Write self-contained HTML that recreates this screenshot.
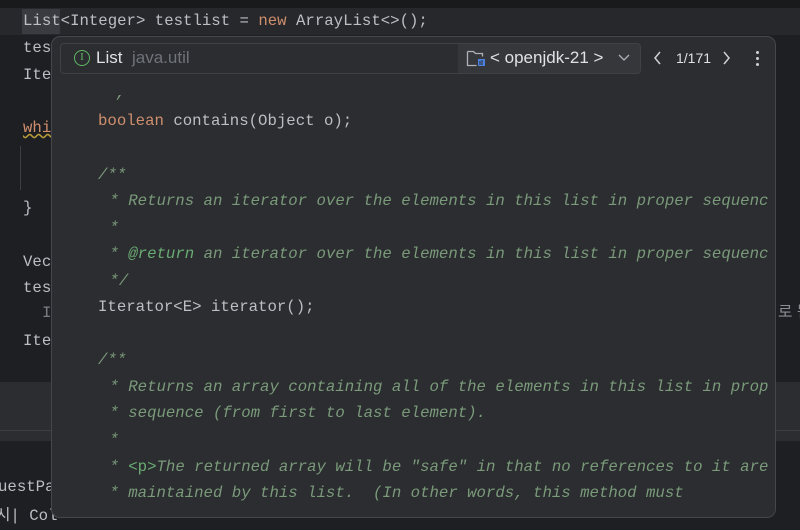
<!DOCTYPE html>
<html><head><meta charset="utf-8"><style>
*{margin:0;padding:0;box-sizing:border-box}
body{width:800px;height:530px;overflow:hidden;background:#1e1f22;position:relative;font-family:"Liberation Mono",monospace;font-size:15.7px;color:#bcbec4}
.t{position:absolute;white-space:pre;line-height:20px}
.k{color:#cf8e6d}.c{color:#7a9a7a;font-style:italic}.tg{color:#6aab73}
#pop{position:absolute;left:51px;top:36px;width:725px;height:482px;background:#2b2d30;border:1px solid #45474c;border-radius:9px;overflow:hidden}
.s{font-family:"Liberation Sans",sans-serif}
</style></head><body>
<div style="position:absolute;left:0;top:0;width:800px;height:8px;background:#191a1c"></div>
<div style="position:absolute;left:0;top:8px;width:800px;height:27px;background:#26282b"></div>
<div style="position:absolute;left:22px;top:9px;width:38px;height:25px;background:#393b40"></div>
<div class="t" style="left:23px;top:11px">List&lt;Integer&gt; testlist = <span class="k">new</span> ArrayList&lt;&gt;();</div>
<div class="t" style="left:23px;top:38px">tes</div>
<div class="t" style="left:23px;top:65px">Ite</div>
<div class="t" style="left:23px;top:118px;color:#cf8e6d;text-decoration:underline wavy #b89b3a">whi</div>
<div style="position:absolute;left:20px;top:146px;width:1px;height:44px;background:#3c3e42"></div>
<div class="t" style="left:23px;top:198px">}</div>
<div class="t" style="left:23px;top:252px">Vec</div>
<div class="t" style="left:23px;top:278px">tes</div>
<div class="t" style="left:42px;top:303px;color:#7a7e85">I</div>
<div class="t" style="left:23px;top:331px">Ite</div>
<div class="t" style="left:778px;top:303px;color:#8a8d93;font-family:'Liberation Sans','Noto Sans CJK KR',sans-serif">로 됨</div>
<div style="position:absolute;left:0;top:382px;width:800px;height:48px;background:#2b2d30"></div>
<div style="position:absolute;left:0;top:430px;width:800px;height:1px;background:#3c3e42"></div>
<div style="position:absolute;left:0;top:431px;width:800px;height:10px;background:#2b2d30"></div>
<div class="t" style="left:-2px;top:477px">uestPa</div>
<div class="t" style="left:-4px;top:506px;font-family:'Liberation Mono','Noto Sans CJK KR',monospace">시| Col</div>
<div id="pop">
 <div style="position:absolute;left:8px;top:6px;width:581px;height:31px;border:1px solid #3f4146;border-radius:4px;background:#35373b"></div>
 <div style="position:absolute;left:9px;top:7px;width:397px;height:29px;background:#2b2d30;border-radius:3px 0 0 3px"></div>
 <div style="position:absolute;left:22px;top:13px;width:16px;height:16px;border:1.5px solid #5fb865;border-radius:50%;color:#5fb865;font:11px 'Liberation Serif',serif;text-align:center;line-height:13px">I</div>
 <div class="t s" style="left:44px;top:11px;font-size:17px;color:#dfe1e5">List</div>
 <div class="t s" style="left:80px;top:11px;font-size:17px;color:#6f737a">java.util</div>
 <svg style="position:absolute;left:414px;top:12px" width="22" height="20" viewBox="0 0 22 20"><path d="M1.5 2.5h6l2 2h7v3M1.5 2.5v14h9" fill="none" stroke="#aeb1b7" stroke-width="1.3"/><rect x="12" y="10" width="7" height="7" fill="#4b7fe0"/><path d="M14 12v4M16 11v5" stroke="#2b2d30"/></svg>
 <div class="t s" style="left:438px;top:11px;font-size:17px;color:#dfe1e5">&lt; openjdk-21 &gt;</div>
 <svg style="position:absolute;left:566px;top:17px" width="12" height="8"><path d="M1 1l5 5 5-5" fill="none" stroke="#aeb1b7" stroke-width="1.3"/></svg>
 <svg style="position:absolute;left:601px;top:14px" width="10" height="14"><path d="M7 1L2 7l5 6" fill="none" stroke="#ced0d6" stroke-width="1.5"/></svg>
 <div class="t s" style="left:624px;top:11px;font-size:14px;color:#dfe1e5">1/171</div>
 <svg style="position:absolute;left:669px;top:14px" width="10" height="14"><path d="M3 1l5 6-5 6" fill="none" stroke="#ced0d6" stroke-width="1.5"/></svg>
 <div style="position:absolute;left:704px;top:14px;width:3px;height:3px;background:#ced0d6;border-radius:50%;box-shadow:0 6px 0 #ced0d6,0 12px 0 #ced0d6"></div>
 <div class="t c" style="left:64px;top:46px">,</div>
 <div class="t" style="left:46px;top:74px"><span class="k">boolean</span> contains(Object o);</div>
 <div class="t c" style="left:46px;top:128px">/**</div>
 <div class="t c" style="left:48px;top:154px"> * Returns an iterator over the elements in this list in proper sequence.</div>
 <div class="t c" style="left:48px;top:181px"> *</div>
 <div class="t c" style="left:48px;top:207px"> * <span class="tg" style="font-style:italic">@return</span> an iterator over the elements in this list in proper sequence</div>
 <div class="t c" style="left:48px;top:234px"> */</div>
 <div class="t" style="left:46px;top:260px">Iterator&lt;E&gt; iterator();</div>
 <div class="t c" style="left:46px;top:313px">/**</div>
 <div class="t c" style="left:48px;top:340px"> * Returns an array containing all of the elements in this list in proper</div>
 <div class="t c" style="left:48px;top:366px"> * sequence (from first to last element).</div>
 <div class="t c" style="left:48px;top:393px"> *</div>
 <div class="t c" style="left:48px;top:420px"> * <span class="tg" style="font-style:normal">&lt;p&gt;</span>The returned array will be "safe" in that no references to it are</div>
 <div class="t c" style="left:48px;top:446px"> * maintained by this list.  (In other words, this method must</div>
 <div style="position:absolute;left:717px;top:45px;width:8px;height:440px;background:#2b2d30"></div>
</div>
</body></html>
